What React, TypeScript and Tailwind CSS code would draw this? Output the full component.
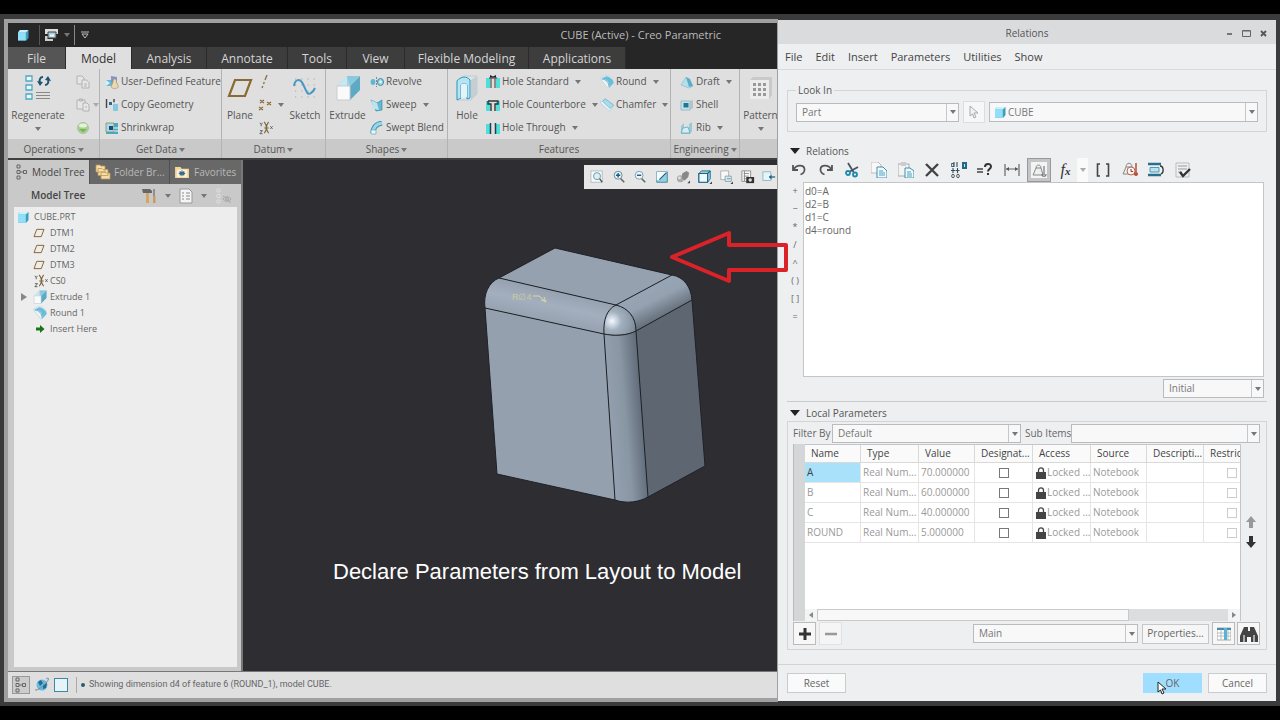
import React, { useState } from 'react';

interface Parameter {
  name: string;
  value: string;
}

const parameters: Parameter[] = [
  { name: 'A', value: '70.000000' },
  { name: 'B', value: '60.000000' },
  { name: 'C', value: '40.000000' },
  { name: 'ROUND', value: '5.000000' },
];

const operators = ['+', '−', '*', '/', '^', '( )', '[ ]', '='];

type IconProps = { className?: string };

const Caret = ({ className = 'text-[#777]' }: IconProps) => (
  <svg viewBox="0 0 6 4" className={`h-1 w-1.5 shrink-0 ${className}`} fill="currentColor"><path d="M0 0h6L3 4z" /></svg>
);

const CubeIcon = ({ className = 'h-3 w-3' }: IconProps) => (
  <svg viewBox="0 0 12 12" className={`shrink-0 ${className}`}>
    <path d="M1 3.500 3 1h8.500v8L9.500 11.500H1z" fill="#3f9dbb" />
    <path d="M1 3.500h7.800v8H1z" fill="#8fe0f8" />
    <path d="M1 3.500 3 1h8.500L8.800 3.500z" fill="#c9f2fc" />
  </svg>
);

const PlaneIcon = ({ className = 'h-3 w-3.5' }: IconProps) => (
  <svg viewBox="0 0 26 22" className={className} fill="none" stroke="#8a6a33" strokeWidth="2.2">
    <path d="M8 3h16l-6 16H2z" />
  </svg>
);

const CsysIcon = ({ className = 'h-3.5 w-4' }: IconProps) => (
  <svg viewBox="0 0 16 16" className={className} fill="none" stroke="#7d6433" strokeWidth="1.2">
    <path d="M6 1c3 4 3 9 0 13M11 1C8 5 8 10 11 14M6 8h5" />
    <path d="m1 2 1.500 2L4 2M2.500 4v2M1 11h3l-3 3.500h3M13 6l2.500 3M15.500 6 13 9" stroke="#555" strokeWidth="1" />
  </svg>
);

const ExtrudeIcon = ({ className = 'h-3.5 w-3.5' }: IconProps) => (
  <svg viewBox="0 0 26 26" className={className}>
    <path d="M2 11 12 1h13v14L15 25H2z" fill="#a5d3e2" />
    <path d="m12 1 13 0-10 10v14l10-10V1z" fill="#5ea9c4" />
    <path d="M12 1v10L2 11z" fill="#c8e8f1" />
    <path d="M12 1h13L15 11z" fill="#8cc9dd" />
    <path d="M2 11h13v14H2z" fill="#fafafa" stroke="#c8ccd0" strokeWidth="1" />
  </svg>
);

const RoundIcon = ({ className = 'h-3.5 w-3.5' }: IconProps) => (
  <svg viewBox="0 0 16 16" className={className}>
    <path d="m0 4 6-3.500c5 0 9 3 9.500 8L11 14 9 15z" fill="#eaf4f7" stroke="#a9cbd6" strokeWidth=".6" />
    <path d="m2 4 5-2.500c4 .5 8 3.500 8.500 7.500L11 14C11 8 8 4.500 2 4z" fill="#67bddb" />
    <path d="M2 4.500c5 .5 8 3.500 8.500 9.500" fill="none" stroke="#3089aa" strokeWidth=".8" />
  </svg>
);

const ChamferIcon = () => (
  <svg viewBox="0 0 16 16" className="h-3.5 w-3.5">
    <path d="m0 5 6-4 9.500 7L11 15z" fill="#eef5f7" stroke="#9bc7d6" strokeWidth=".7" />
    <path d="m6 1 9.500 7-4 4L3 4z" fill="#a9dcea" stroke="#4aa0bd" strokeWidth=".6" />
  </svg>
);

const RegenerateIcon = () => (
  <svg viewBox="0 0 26 26" className="h-[26px] w-[26px]">
    <g fill="#e8f8fc" stroke="#4da8c5" strokeWidth="1.300">
      <path d="M1 1h6v5H1zM1 10h6v5H1zM1 19h6v5H1z" />
    </g>
    <path d="M11 17.500h14M11 20.500h14M11 23.500h14" stroke="#888" strokeWidth="1.200" />
    <g fill="none" stroke="#1d5573" strokeWidth="2">
      <path d="M18 2c-3 0-4 3-3 6M20 10c3 0 4-3 3-6" />
    </g>
    <path d="m12 6 3 5 3-4zM20 5l3-4 3 5z" fill="#1d5573" />
  </svg>
);

const CopyIcon = ({ className = 'h-3.5 w-3.5' }: IconProps) => (
  <svg viewBox="0 0 14 14" className={className} fill="#e6e6e6" stroke="#b3b3b3">
    <path d="M1 1h5l2 2v6H1z" />
    <path d="M6 5h4.500L13 7.500V13H6zM8 9h3M8 11h3" />
  </svg>
);

const PasteIcon = () => (
  <svg viewBox="0 0 14 14" className="h-3.5 w-3.5" fill="#e6e6e6" stroke="#b3b3b3">
    <path d="M1 2h8v9H1zM3.500 1h3v2h-3z" />
    <path d="M7 5h4l2 2v6H7zM9 9h2" />
  </svg>
);

const OrbIcon = () => (
  <svg viewBox="0 0 14 14" className="h-3.5 w-3.5">
    <circle cx="7" cy="7" r="5.500" fill="#a7d28d" stroke="#b5bdb0" />
    <ellipse cx="7" cy="4.500" rx="4" ry="2" fill="#e3f3da" />
    <path d="M3 8h8L7 11.500z" fill="#79b65a" />
  </svg>
);

const UdfIcon = () => (
  <svg viewBox="0 0 14 14" className="h-3.5 w-3.5">
    <path d="M1 5h8v6H1z" fill="#67b9d8" />
    <path d="m6 1 6 1v6H6z" fill="#8495c8" />
    <path d="M9.500 4c2 0 2 2 2 3l2 5c-2 2-6 2-7.500 0l2-5c0-1 0-3 1.500-3z" fill="#ead7b4" stroke="#ab8b57" strokeWidth=".6" />
    <path d="m1 5 4 3-4 3z" fill="#d4f1fa" />
  </svg>
);

const CopyGeomIcon = () => (
  <svg viewBox="0 0 14 14" className="h-3.5 w-3.5">
    <path d="M1.500 1v9M9 1v9" stroke="#444" strokeWidth="1.400" />
    <path d="M4 4h3v3H4z" fill="#236d8c" />
    <path d="M8 5h5v8H8z" fill="#86c9de" />
    <path d="M7 5h6" stroke="#fff" />
  </svg>
);

const ShrinkwrapIcon = () => (
  <svg viewBox="0 0 14 14" className="h-3.5 w-3.5">
    <path d="M1 2h12v11H1z" fill="#47a9c6" />
    <path d="M1 2h8v9H1z" fill="#a6dceb" stroke="#858a60" strokeWidth=".8" />
    <path d="M4 5h4v4H4z" fill="#204c74" />
    <path d="M9 7h5M9 10h5" stroke="#f3f7f8" />
  </svg>
);

const AxisIcon = () => (
  <svg viewBox="0 0 14 14" className="h-3.5 w-3.5"><path d="m9 0-2 5M6.300 7 5.500 9M4.800 11 4 13" stroke="#8b734b" strokeWidth="1.400" /></svg>
);

const PointIcon = () => (
  <svg viewBox="0 0 14 14" className="h-3.5 w-3.5" stroke="#8a6a33" strokeWidth="1.200">
    <path d="m2 2 4 3M6 2 2 5M9 4l4 3M13 4 9 7M1 9l4 3M5 9l-4 3" />
  </svg>
);

const SketchIcon = () => (
  <svg viewBox="0 0 26 24" className="h-6 w-[26px]" fill="none">
    <path d="M3 3h20M3 9h20M3 15h20M3 21h20" stroke="#b2a794" strokeWidth="1.200" strokeDasharray="1.200 5" />
    <path d="M2 10c1-7 6-8 9-2s4 12 8 9c2-1 3-3 4-5" stroke="#4599c6" strokeWidth="2" />
  </svg>
);

const RevolveIcon = () => (
  <svg viewBox="0 0 14 14" className="h-3.5 w-3.5">
    <ellipse cx="3" cy="7" rx="2.400" ry="3" fill="#60b7d4" />
    <ellipse cx="10.500" cy="7" rx="3" ry="3.500" fill="#9ad4e5" stroke="#368daa" />
    <path d="M6.500 2v10" stroke="#888" strokeDasharray="2 1" />
    <circle cx="10.500" cy="7" r="1.300" fill="#ecf8fb" />
  </svg>
);

const SweepIcon = () => (
  <svg viewBox="0 0 14 14" className="h-3.5 w-3.5">
    <path d="m1 2 6 3 5-3v10l-6 1z" fill="#67b6cf" stroke="#378cab" strokeWidth=".7" />
    <path d="m1 2 6 3 2 7-5-1z" fill="#b9e4f0" />
  </svg>
);

const SweptBlendIcon = () => (
  <svg viewBox="0 0 14 14" className="h-3.5 w-3.5" fill="none">
    <path d="M3 12C3 6 6 3 12 2" stroke="#3f94b1" strokeWidth="5" />
    <path d="M3 12C3 6 6 3 12 2" stroke="#9bd7e8" strokeWidth="3" />
    <path d="M1 9h5v4H1z" fill="#e9f6fa" stroke="#6ca9bd" strokeWidth=".7" />
  </svg>
);

const HoleIcon = () => (
  <svg viewBox="0 0 24 26" className="h-[26px] w-6">
    <path d="m2 5 7-4h13v18l-6 6H2z" fill="#dde3e6" stroke="#b5c5cb" strokeWidth=".7" />
    <path d="m16 5 6-4v18l-6 6z" fill="#c5ced3" />
    <path d="M2 25V6c4-5 10-5 13-1v18l-3 1V10c-1-2-5-2-6 0v13z" fill="#b5e5f3" stroke="#329ac0" strokeWidth="1" />
    <path d="M6 23V10c1-2 5-2 6 0v12z" fill="#e6f4f8" />
  </svg>
);

const HoleRowIcon = ({ kind }: { kind: string }) => (
  <svg viewBox="0 0 14 14" className="h-3.5 w-3.5">
    <path d="M0 3h4v10H0zM10 3h4v10h-4z" fill="#4fded9" />
    {kind === 'standard' && <path d="M5 3v10M9 3v10M3 3h8" stroke="#666" strokeWidth="1.400" />}
    {kind === 'standard' && <path d="M4 2.500V0l3 1.500L10 0v2.500z" fill="#222" />}
    {kind === 'counterbore' && <path d="M2 3h10v3H9v7M5 13V6H2V3" fill="none" stroke="#333" strokeWidth="1.400" />}
    {kind === 'through' && <path d="M4.500 2v11M9.500 2v11" stroke="#253e4f" strokeWidth="1.500" />}
  </svg>
);

const DraftIcon = () => (
  <svg viewBox="0 0 14 14" className="h-3.5 w-3.5">
    <path d="m1 10 5-8 7 9-4 2z" fill="#b6dfec" stroke="#7eb8ca" strokeWidth=".6" />
    <path d="m6 2 4 2 3 7-4 1z" fill="#5bacc9" />
  </svg>
);

const ShellIcon = () => (
  <svg viewBox="0 0 14 14" className="h-3.5 w-3.5">
    <path d="M1 3h9v9H1z" fill="#c1e3ed" stroke="#93bdca" />
    <path d="m10 3 3-1v8l-3 2z" fill="#b5c2c7" />
    <path d="M3.500 5h5v4.500h-5z" fill="#2a7191" />
  </svg>
);

const RibIcon = () => (
  <svg viewBox="0 0 14 14" className="h-3.5 w-3.5">
    <path d="m1 5 3-3v8h5V3l3-2v9l-2 3H1z" fill="#9dc7d5" />
    <path d="M1 12h9l-2-6-5 1z" fill="#d3edf4" stroke="#53a0b9" strokeWidth=".7" />
  </svg>
);

const PatternIcon = () => (
  <svg viewBox="0 0 24 24" className="h-6 w-6">
    <path d="m1 4 3-3h19v18l-3 4H1z" fill="#c9c9c9" />
    <path d="M1 4h19v19H1z" fill="#ececec" />
    <g fill="#999">
      <path d="M4 7h3v3H4zM9 7h3v3H9zM14 7h3v3h-3zM4 12h3v3H4zM9 12h3v3H9zM14 12h3v3h-3zM4 17h3v3H4zM9 17h3v3H9zM14 17h3v3h-3z" />
    </g>
  </svg>
);

const TreeNodesIcon = () => (
  <svg viewBox="0 0 12 16" className="h-4 w-3 shrink-0" fill="none" stroke="#666">
    <path d="M1 1h3v3H1zM1 6.500h3v3H1zM1 12h3v3H1zM7.500 6.500h3v3h-3zM4 8h3" />
  </svg>
);

const FoldersIcon = () => (
  <svg viewBox="0 0 16 16" className="h-4 w-4 shrink-0" fill="#f7dca5" stroke="#b9975b" strokeWidth=".8">
    <path d="M1 1h4l1 1h4v6H1zM3 4.500h4l1 1h5v6H3zM6 8h4l1 1h4v6H6z" />
  </svg>
);

const FavoriteIcon = () => (
  <svg viewBox="0 0 15 13" className="h-3 w-3.5 shrink-0">
    <path d="M0 1h6l1 2h8v10H0z" fill="#f5d79a" />
    <path d="M2 4h11v8H2z" fill="#fcf2d9" />
    <path d="M4 8h7M7.500 5v6M5 6l5 4M10 6l-5 4" stroke="#376b89" strokeWidth="1.200" />
  </svg>
);

// Small toolbar above the model, drawn on a 16 unit grid.
const viewIcons: React.ReactNode[] = [
  <><path d="M1 1h13v13H1z" fill="#f5fafb" stroke="#a9b9bf" /><circle cx="8" cy="7" r="4" fill="#dceff5" stroke="#688f9f" /><path d="m11 10 3 4" stroke="#555" strokeWidth="1.500" /></>,
  <><circle cx="7" cy="6" r="4.500" fill="#eef8fa" stroke="#547e91" /><path d="M4.500 6h5M7 3.500v5" stroke="#175b83" strokeWidth="1.600" /><path d="m10 10 4 4" stroke="#666" strokeWidth="1.800" /></>,
  <><circle cx="7" cy="6" r="4.500" fill="#eef8fa" stroke="#7896a2" /><path d="M4.500 6h5" stroke="#175b83" strokeWidth="1.600" /><path d="m10 10 4 4" stroke="#666" strokeWidth="1.800" /></>,
  <><path d="M2 2h12v12H2z" fill="#92d0e3" stroke="#3b7e99" /><path d="M2 2h12L5 11l-3 1z" fill="#f2fafb" /><path d="m13 3-8 8" stroke="#2d5a6f" strokeWidth="1.300" /></>,
  <><circle cx="5" cy="10" r="4" fill="#aaa" /><path d="m7 4 5-3 3 2-1 5-4 4-3-2z" fill="#888" /><circle cx="4" cy="9" r="1.500" fill="#e5e5e5" /><path d="M13 15h3v-3z" fill="#444" /></>,
  <><path d="m1 4 3-3h10v9l-3 4H1z" fill="#9ed2e3" stroke="#1d6380" /><path d="M1 4h10v10H1zM11 4l3-3" fill="#eefafd" stroke="#1d6380" strokeWidth="1.300" /><path d="M13 16h3v-3z" fill="#444" /></>,
  <><path d="M2 1h9v10H2z" fill="#f8f8f8" stroke="#aaa" /><path d="M7 7h7v6H7z" fill="#dcedf2" stroke="#7f9da8" /><path d="M9 10h4" stroke="#4d8ba1" /><path d="M13 16h3v-3z" fill="#444" /></>,
  <><path d="M1 1h10v12H1zM3 4h6M3 7h6M3 10h3M4 1v12" fill="#f7f7f7" stroke="#888" /><path d="M6 8h9v7H6z" fill="#333" /><circle cx="10.500" cy="11.500" r="2" fill="#ddd" /></>,
  <><path d="M1 2h9v10H1z" fill="#e6f4f8" stroke="#8ab5c4" /><path d="M8 8h7" stroke="#246986" strokeWidth="1.500" /><path d="m8 8 3-3v6z" fill="#246986" /></>,
];

const editIcons: { label: string; art: React.ReactNode }[] = [
  { label: 'Undo', art: <path d="M2 3v5h5M2.500 7.500C6 2 13 3 13.500 7c.3 3-2 5-4 5.500" fill="none" stroke="#555" strokeWidth="1.800" /> },
  { label: 'Redo', art: <path d="M14 3v5H9M13.500 7.500C10 2 3 3 2.500 7c-.3 3 2 5 4 5.500" fill="none" stroke="#555" strokeWidth="1.800" /> },
  { label: 'Cut', art: <><path d="M4 1 9.500 10M14 5 5 10" stroke="#456" strokeWidth="1.800" /><circle cx="4" cy="11" r="2" fill="none" stroke="#2189ae" strokeWidth="1.800" /><circle cx="11" cy="12.500" r="2" fill="none" stroke="#2189ae" strokeWidth="1.800" /></> },
  { label: 'Copy', art: <><path d="M0 0h7l3 3v8H0z" fill="#f8f8f8" stroke="#bbb" /><path d="M6 5h6l4 4v7H6z" fill="#eefafd" stroke="#3f8eaa" /><path d="M8 9h4M8 11h6M8 13h6" stroke="#4ea1bd" /></> },
  { label: 'Paste', art: <><path d="M0 2h11v12H0z" fill="#f3f3f3" stroke="#aaa" /><path d="M3 0h5v4H3z" fill="#ccc" /><path d="M7 6h5l4 3v7H7z" fill="#eefafd" stroke="#3f8eaa" /><path d="M9 10h4M9 12h5M9 14h5" stroke="#4ea1bd" /></> },
  { label: 'Delete', art: <path d="m2 2 12 12M14 2 2 14" stroke="#444" strokeWidth="2.400" /> },
  { label: 'Switch dimensions', art: <><path d="M0 3a1.500 1.500 0 1 0 3 0 1.500 1.500 0 1 0-3 0M3 0v5M6 0v5M2 6v5M6.500 6v5M0 8.500h4M4.500 8.500h4" fill="none" stroke="#31505e" strokeWidth="1.100" /><ellipse cx="2" cy="14" rx="1.300" ry="1.800" fill="none" stroke="#555" /><ellipse cx="7" cy="14" rx="1.300" ry="1.800" fill="none" stroke="#555" /><path d="M11 0h5v7h-5z" fill="#236985" /><path d="M13.500 2v3" stroke="#c3e5ef" /></> },
  { label: 'Evaluate', art: <><path d="M0 7h6M0 10h6" stroke="#444" strokeWidth="1.600" /><path d="M8 5c0-4 6-4 6-.5 0 2.500-3 2.500-3 5M11 11v2" fill="none" stroke="#333" strokeWidth="2" /></> },
  { label: 'Insert dimension', art: <><path d="M1 2v12M15 2v12M2 7h12" stroke="#666" strokeWidth="1.200" /><path d="m2 7 3-2v4zM14 7l-3-2v4z" fill="#555" /></> },
  { label: 'Set units', art: <><path d="M0 0h16v16H0z" fill="#f4f4f4" /><path d="m2 13 3-7h5l2 7zM5 6c0-4 5-4 5 0" fill="#eee" stroke="#888" /><path d="M13 4v9M11 12c0 3 4 3 4 0" fill="none" stroke="#777" strokeWidth="1.200" /></> },
];

const editIconsAfter: { label: string; art: React.ReactNode }[] = [
  { label: 'Brackets', art: <path d="M5 2H2.500v12H5M11 2h2.500v12H11" fill="none" stroke="#444" strokeWidth="1.600" /> },
  { label: 'Unit sensitive', art: <><path d="m1 12 3-7h6l3 7zM4 5c0-5 6-5 6 0" fill="#eee" stroke="#888" /><circle cx="9" cy="9" r="4" fill="#fff4f0" stroke="#b46a54" /><path d="M9 7v2.500h2" fill="none" stroke="#934" /><path d="M14 1v9" stroke="#b55a46" strokeWidth="1.600" /><circle cx="14" cy="12" r="2" fill="#b84d38" /></> },
  { label: 'Sort', art: <><path d="M0 2h13M0 13h13" stroke="#28708d" strokeWidth="2.400" /><path d="M2 5.500h9v4.500H2z" fill="#b6e3ef" stroke="#5699af" /><path d="M12 4c4 0 4 7 1 8" fill="none" stroke="#333" strokeWidth="1.300" /></> },
  { label: 'Verify', art: <><path d="M1 1h13v14H1z" fill="#f0f0f0" stroke="#bbb" /><path d="M3 4h9M3 7h9M3 10h4" stroke="#999" /><path d="m5 10 3 4 7-7" fill="none" stroke="#333" strokeWidth="2.400" /></> },
];

interface SelectBoxProps {
  id: string;
  label?: string;
  value: string;
  className: string;
  icon?: React.ReactNode;
}

const SelectBox = ({ id, label, value, className, icon }: SelectBoxProps) => (
  <div className={`relative border border-[#b9bcbf] bg-[#f8f8f8] ${className}`}>
    <select
      id={id}
      aria-label={label}
      className={`block h-full w-full appearance-none bg-transparent pr-4 text-[10px] text-[#777] outline-none ${icon ? 'pl-[18px]' : 'pl-[5px]'}`}
    >
      <option>{value}</option>
    </select>
    {icon && <span className="pointer-events-none absolute inset-y-0 left-1 flex items-center">{icon}</span>}
    <span className="pointer-events-none absolute inset-y-0 right-0 flex w-3 items-center justify-center border-l border-[#c5c7c9]">
      <Caret />
    </span>
  </div>
);

interface GroupProps {
  title: string;
  menu?: boolean;
  className: string;
  children: React.ReactNode;
}

const Group = ({ title, menu, className, children }: GroupProps) => (
  <section className={`flex flex-col border-r border-[#b3b3b3] ${className}`}>
    <div className="flex h-[70px] bg-[#dfdfdf] pt-px">{children}</div>
    <h2 className="flex h-[19px] items-center justify-center gap-0.5 bg-[#c9c9c9] pt-0.5 text-[10px] text-[#555]">
      {title}
      {menu && <Caret />}
    </h2>
  </section>
);

const Command = ({ icon, label, menu }: { icon: React.ReactNode; label: string; menu?: boolean }) => (
  <button className="flex h-[23px] items-center gap-0.5 whitespace-nowrap text-[10px] text-[#555]">
    {icon}
    <span>{label}</span>
    {menu && <Caret className="ml-1 text-[#777]" />}
  </button>
);

const BigCommand = ({ icon, label, menu, className }: { icon: React.ReactNode; label: string; menu?: boolean; className: string }) => (
  <button className={`flex shrink-0 flex-col items-center pt-1 text-[10px] text-[#555] ${className}`}>
    <span className="flex h-7 items-center">{icon}</span>
    <span className="mt-1.5 leading-[15px]">{label}</span>
    {menu && <Caret className="mt-1 text-[#777]" />}
  </button>
);

const Ribbon = () => (
  <div className="flex overflow-hidden border-b-2 border-[#3f3f3f]">
    <Group title="Operations" menu className="w-[92px] shrink-0">
      <BigCommand icon={<RegenerateIcon />} label="Regenerate" menu className="w-[60px]" />
      <div className="flex flex-col">
        <button aria-label="Copy" className="flex h-[23px] items-center pl-2"><CopyIcon /></button>
        <button aria-label="Paste" className="flex h-[23px] items-center gap-[3px] pl-2"><PasteIcon /><Caret className="text-[#aaa]" /></button>
        <button aria-label="Regeneration manager" className="flex h-[23px] items-center pl-2"><OrbIcon /></button>
      </div>
    </Group>
    <Group title="Get Data" menu className="w-[122px] shrink-0">
      <div className="flex flex-col items-start pl-[5px]">
        <Command icon={<UdfIcon />} label="User-Defined Feature" />
        <Command icon={<CopyGeomIcon />} label="Copy Geometry" />
        <Command icon={<ShrinkwrapIcon />} label="Shrinkwrap" />
      </div>
    </Group>
    <Group title="Datum" menu className="w-[104px] shrink-0">
      <BigCommand icon={<PlaneIcon className="h-[22px] w-[26px]" />} label="Plane" className="w-9" />
      <div className="flex w-7 flex-col">
        <button aria-label="Axis" className="flex h-[23px] items-center"><AxisIcon /></button>
        <button aria-label="Point" className="flex h-[23px] items-center gap-1.5"><PointIcon /><Caret /></button>
        <button aria-label="Coordinate system" className="flex h-[23px] items-center"><CsysIcon /></button>
      </div>
      <BigCommand icon={<SketchIcon />} label="Sketch" className="w-[38px]" />
    </Group>
    <Group title="Shapes" menu className="w-[122px] shrink-0">
      <BigCommand icon={<ExtrudeIcon className="h-[26px] w-[26px]" />} label="Extrude" className="w-[43px]" />
      <div className="flex flex-col items-start pl-px">
        <Command icon={<RevolveIcon />} label="Revolve" />
        <Command icon={<SweepIcon />} label="Sweep" menu />
        <Command icon={<SweptBlendIcon />} label="Swept Blend" />
      </div>
    </Group>
    <Group title="Features" className="w-[223px] shrink-0">
      <BigCommand icon={<HoleIcon />} label="Hole" className="w-[38px]" />
      <div className="flex w-[114px] flex-col items-start">
        <Command icon={<HoleRowIcon kind="standard" />} label="Hole Standard" menu />
        <Command icon={<HoleRowIcon kind="counterbore" />} label="Hole Counterbore" menu />
        <Command icon={<HoleRowIcon kind="through" />} label="Hole Through" menu />
      </div>
      <div className="flex flex-col items-start">
        <Command icon={<RoundIcon />} label="Round" menu />
        <Command icon={<ChamferIcon />} label="Chamfer" menu />
      </div>
    </Group>
    <Group title="Engineering" menu className="w-[69px] shrink-0">
      <div className="flex flex-col items-start pl-[9px]">
        <Command icon={<DraftIcon />} label="Draft" menu />
        <Command icon={<ShellIcon />} label="Shell" />
        <Command icon={<RibIcon />} label="Rib" menu />
      </div>
    </Group>
    <Group title="" className="min-w-0 flex-1 border-r-0">
      <BigCommand icon={<PatternIcon />} label="Pattern" menu className="w-[41px]" />
    </Group>
  </div>
);

const tabs = [
  { label: 'File', className: 'w-[58px] bg-[#555] text-[#d5d5d5]' },
  { label: 'Model', className: 'w-[66px] bg-[#dfdfdf] text-[#333]' },
  { label: 'Analysis', className: 'w-[75px] bg-[#3d3d3d] text-[#d5d5d5]' },
  { label: 'Annotate', className: 'w-[81px] bg-[#3d3d3d] text-[#d5d5d5]' },
  { label: 'Tools', className: 'w-[59px] bg-[#3d3d3d] text-[#d5d5d5]' },
  { label: 'View', className: 'w-[58px] bg-[#3d3d3d] text-[#d5d5d5]' },
  { label: 'Flexible Modeling', className: 'w-[124px] bg-[#3d3d3d] text-[#d5d5d5]' },
  { label: 'Applications', className: 'w-[97px] bg-[#3d3d3d] text-[#d5d5d5]' },
];

const treeItems: { label: string; icon: React.ReactNode; open?: boolean }[] = [
  { label: 'DTM1', icon: <PlaneIcon className="h-2.5 w-3" /> },
  { label: 'DTM2', icon: <PlaneIcon className="h-2.5 w-3" /> },
  { label: 'DTM3', icon: <PlaneIcon className="h-2.5 w-3" /> },
  { label: 'CS0', icon: <CsysIcon /> },
  { label: 'Extrude 1', icon: <ExtrudeIcon />, open: true },
  { label: 'Round 1', icon: <RoundIcon /> },
  {
    label: 'Insert Here',
    icon: <svg viewBox="0 0 10 10" className="ml-0.5 h-2.5 w-2.5"><path d="M1 3.500h4V1l4.500 4L5 9V6.500H1z" fill="#187418" /></svg>,
  },
];

const ModelTree = () => (
  <aside className="flex w-[235px] shrink-0 flex-col border-r-2 border-[#777] bg-[#c9c9c9]">
    <div className="flex h-6 bg-[#686868] text-[10px]">
      <button className="flex w-[82px] items-center gap-1 border-r border-[#555] bg-[#c9c9c9] pl-2 whitespace-nowrap text-[#444]"><TreeNodesIcon />Model Tree</button>
      <button className="flex w-20 items-center gap-[3px] border-r border-[#505050] pl-[5px] whitespace-nowrap text-[#b9b9b9]"><FoldersIcon />Folder Br...</button>
      <button className="flex flex-1 items-center gap-[5px] pl-[5px] whitespace-nowrap text-[#b9b9b9]"><FavoriteIcon />Favorites</button>
    </div>
    <div className="flex h-[23px] items-center pr-2 pl-[23px]">
      <h2 className="flex-1 text-[10px] font-semibold text-[#444]">Model Tree</h2>
      <button aria-label="Settings" className="flex items-center gap-2">
        <svg viewBox="0 0 16 16" className="h-4 w-4"><path d="M1 1h8l2 2v2H2z" fill="#666" /><path d="M5 5h3v10H5z" fill="#d6a563" /><path d="M13 1v7" stroke="#777" strokeWidth="1.400" /><path d="M12 8h2.500v7H12z" fill="#c89b62" /></svg>
        <Caret />
      </button>
      <button aria-label="Show" className="ml-2 flex items-center gap-2">
        <svg viewBox="0 0 14 16" className="h-4 w-3.5"><path d="M1 1h9l3 3v11H1z" fill="#f5f5f5" stroke="#999" /><path d="M3 5h2M7 5h4M3 8h2M7 8h4M3 11h2M7 11h4" stroke="#888" /></svg>
        <Caret />
      </button>
      <button aria-label="Find" className="ml-2">
        <svg viewBox="0 0 18 16" className="h-4 w-[18px]" fill="none" stroke="#aaa"><path d="M2 1h3v3H2zM2 6.500h3v3H2zM2 12h3v3H2z" stroke="#ddd" /><path d="M8 11c2-3 6-3 8 0-2 3-6 3-8 0M8 8l8 7" /><circle cx="12" cy="11" r="1.500" /></svg>
      </button>
    </div>
    <ul className="mr-1 mb-1 ml-1.5 flex-1 bg-[#ededed] pt-0.5 text-[9px] text-[#666]">
      <li className="flex h-4 items-center gap-[5px] pl-[3px]"><CubeIcon />CUBE.PRT</li>
      {treeItems.map((item) => (
        <li key={item.label} className="flex h-4 items-center pl-[7px]">
          <span className="w-3">
            {item.open && <svg viewBox="0 0 6 8" className="h-2 w-1.5"><path d="M0 0v8l6-4z" fill="#888" /></svg>}
          </span>
          <span className="flex w-[17px] items-center">{item.icon}</span>
          {item.label}
        </li>
      ))}
    </ul>
  </aside>
);

const SolidModel = () => (
  <svg viewBox="483 247 224 257" className="absolute top-[87px] left-[240px] h-[257px] w-[224px]">
    <defs>
      <linearGradient id="leftRound" gradientUnits="userSpaceOnUse" x1="560" y1="290" x2="553" y2="323">
        <stop offset="0" stopColor="#94a0ae" />
        <stop offset=".5" stopColor="#a3afbe" />
        <stop offset="1" stopColor="#96a2b0" />
      </linearGradient>
      <linearGradient id="rightRound" gradientUnits="userSpaceOnUse" x1="643" y1="288" x2="659" y2="320">
        <stop offset="0" stopColor="#98a5b4" />
        <stop offset=".45" stopColor="#94a1b0" />
        <stop offset="1" stopColor="#626c78" />
      </linearGradient>
      <linearGradient id="frontRound" gradientUnits="userSpaceOnUse" x1="608" y1="420" x2="643" y2="417">
        <stop offset="0" stopColor="#94a0af" />
        <stop offset=".5" stopColor="#8996a4" />
        <stop offset="1" stopColor="#606b78" />
      </linearGradient>
      <radialGradient id="corner" gradientUnits="userSpaceOnUse" cx="612" cy="321" r="27">
        <stop offset="0" stopColor="#f4f9fd" />
        <stop offset=".12" stopColor="#d7e1ea" />
        <stop offset=".35" stopColor="#a3b0be" />
        <stop offset=".7" stopColor="#8d9aa8" />
        <stop offset="1" stopColor="#727e8b" />
      </radialGradient>
    </defs>
    <path d="M499 278 555 248l117 27-56 30z" fill="#95a1ae" />
    <path d="M485 308 604 334l11 166-118-26z" fill="#94a0ae" />
    <path d="m636 331 56-31 13 166-57 31z" fill="#5d6671" />
    <path d="m499 278 117 27c-7 4-13 14-12 29l-119-26c-2-14 4-26 14-30z" fill="url(#leftRound)" />
    <path d="m616 305 56-30c12 2 19 12 20 25l-56 31c0-14-8-23-20-26z" fill="url(#rightRound)" />
    <path d="m604 334 11 166c12 4 24 2 33-3l-12-166c-10 5-22 5-32 3z" fill="url(#frontRound)" />
    <path d="M616 305c-9 4-13 15-12 29 12 2 23 1 32-3 0-14-8-23-20-26z" fill="url(#corner)" />
    <g fill="none" stroke="#1e2228" strokeWidth="1">
      <path d="M499 278 555 248l117 27c12 2 19 12 20 25l13 166-57 31c-9 5-21 7-33 3l-118-26-12-166c-2-14 4-26 14-30z" />
      <path d="m499 278 117 27 56-30M485 308l119 26c10 2 22 2 32-3l56-31" />
      <path d="M616 305c-9 4-13 15-12 29l11 166M616 305c12 3 20 12 20 26l12 166" />
    </g>
    <text x="512" y="300" fontSize="9" fontFamily="Liberation Sans, sans-serif" fill="#c9ca9a">R∅4</text>
    <path d="M533 296h6l7 6m0 0-2-5m2 5-5-2" fill="none" stroke="#dad99a" strokeWidth="1" />
  </svg>
);

const Viewport = () => (
  <main className="relative flex-1 bg-[#2e2d32]">
    <div className="flex justify-end pt-[5px]">
      <div className="flex h-6 w-[193px] items-center justify-between bg-[#e6e6e6] pr-px pl-1.5">
        {viewIcons.map((art, i) => (
          <button key={i} aria-label={`View tool ${i + 1}`}>
            <svg viewBox="0 0 16 16" className="h-3.5 w-3.5">{art}</svg>
          </button>
        ))}
      </div>
    </div>
    <SolidModel />
    <p className="absolute top-[399px] left-[90px] whitespace-nowrap font-['Liberation_Sans',sans-serif] text-[22px] leading-[26px] text-white">
      Declare Parameters from Layout to Model
    </p>
    <svg viewBox="668 229 124 56" className="absolute top-[69px] -right-[15px] z-10 h-14 w-[124px]">
      <path d="m672 257 57-24v12h57v25h-57v11z" fill="none" stroke="#dc2229" strokeWidth="4" strokeLinejoin="round" />
    </svg>
  </main>
);

const PartWindow = () => (
  <div className="relative z-10 flex min-w-0 flex-1 flex-col border-4 border-r border-[#a0a0a0]">
    <header className="flex h-6 items-center bg-[#262626] pl-[9px]">
      <CubeIcon />
      <span className="ml-2.5 h-5 w-px bg-[#555]" />
      <button aria-label="Windows" className="ml-1 flex items-center gap-[5px]">
        <svg viewBox="0 0 15 14" className="h-3.5 w-[15px]"><path d="M1 1h13v5H1z" fill="#ddd" /><path d="M4 4h8v6H4z" fill="#a8d0dc" stroke="#444" /><path d="M6 6.500h4v2H6z" fill="#f4f4f4" /><path d="M1 8h2.500v5H1zM1 11h8v2H1z" fill="#ccc" /></svg>
        <Caret />
      </button>
      <span className="ml-1 h-5 w-px bg-[#888]" />
      <svg viewBox="0 0 8 8" className="ml-1.5 h-2 w-2" fill="none" stroke="#bbb"><path d="M0 1h8M1 3h6L4 7z" /></svg>
      <h1 className="flex-1 pr-14 text-right text-[11px] text-[#bbb]">CUBE (Active) - Creo Parametric</h1>
    </header>
    <nav className="flex h-[22px] bg-[#262626]">
      {tabs.map((tab) => (
        <button key={tab.label} className={`border-r border-[#2a2a2a] pt-px whitespace-nowrap text-[12px] ${tab.className}`}>
          {tab.label}
        </button>
      ))}
    </nav>
    <Ribbon />
    <div className="flex flex-1">
      <ModelTree />
      <Viewport />
    </div>
    <footer className="flex h-[27px] items-center border-t border-[#777] bg-[#dfdfdf] pl-1 font-['Roboto',sans-serif] text-[9px] text-[#666]">
      <button aria-label="Toggle tree" className="flex h-[18px] w-[18px] items-center justify-center border border-[#999] bg-[#ccc]"><TreeNodesIcon /></button>
      <button aria-label="Toggle browser" className="ml-1">
        <svg viewBox="0 0 16 16" className="h-4 w-4"><circle cx="8" cy="8" r="5.500" fill="#6bb9dc" /><path d="m4 5 3-2 2 3-3 3zM9 8l4-2-1 5-3 1z" fill="#1f6c98" /><path d="M2 12C0 15 6 12 11 7s4-7 1-5" fill="none" stroke="#7b8b93" /></svg>
      </button>
      <button aria-label="Full screen" className="ml-1 h-3.5 w-3.5 border border-[#3d88a3] bg-[#e6f3f7]" />
      <span className="ml-2 h-4 w-px bg-[#aaa]" />
      <span className="ml-1 h-1 w-1 rounded-full bg-[#295a72]" />
      <p className="ml-1">Showing dimension d4 of feature 6 (ROUND_1), model CUBE.</p>
    </footer>
  </div>
);

const SectionTitle = ({ children }: { children: React.ReactNode }) => (
  <h3 className="flex h-3.5 items-center gap-1.5 pl-[3px] text-[10px] text-[#555]">
    <svg viewBox="0 0 10 6" className="h-1.5 w-2.5"><path d="M0 0h10L5 6z" fill="#222" /></svg>
    {children}
  </h3>
);

const LockIcon = () => (
  <svg viewBox="0 0 10 12" className="h-3 w-2.5 shrink-0"><path d="M2.500 6V3.500c0-3.500 5-3.500 5 0V6" fill="none" stroke="#444" strokeWidth="1.300" /><path d="M0 5h10v7H0z" fill="#444" /></svg>
);

const columns = [
  { label: 'Name', className: 'w-14' },
  { label: 'Type', className: 'w-[58px]' },
  { label: 'Value', className: 'w-[56px]' },
  { label: 'Designat...', className: 'w-[58px]' },
  { label: 'Access', className: 'w-[58px]' },
  { label: 'Source', className: 'w-[56px]' },
  { label: 'Descripti...', className: 'w-[57px]' },
  { label: 'Restric', className: 'w-[57px]' },
];

const cell = 'h-5 overflow-hidden border-r border-b border-[#e5e5e5] px-0.5 text-left whitespace-nowrap';
const accessCell = 'h-5 border-r border-b border-[#e5e5e5] pl-[3px] text-left whitespace-nowrap';

const ParameterTable = ({ selected, onSelect }: { selected: string; onSelect: (name: string) => void }) => (
  <table className="w-[456px] table-fixed border-separate border-spacing-0 text-[10px] text-[#999]">
    <thead>
      <tr>
        {columns.map((c) => (
          <th key={c.label} className={`h-[18px] border-r border-b border-[#d9d9d9] bg-[#fafafa] pl-1.5 text-left font-normal whitespace-nowrap text-[#444] ${c.className}`}>{c.label}</th>
        ))}
      </tr>
    </thead>
    <tbody>
      {parameters.map((p) => (
        <tr key={p.name} onClick={() => onSelect(p.name)}>
          <td className={`${cell} ${p.name === selected ? 'bg-[#a9e1fb] text-[#444]' : ''}`}>{p.name}</td>
          <td className={cell}>Real Num...</td>
          <td className={cell}>{p.value}</td>
          <td className={cell}>
            <input type="checkbox" aria-label={`Designate ${p.name}`} className="mx-auto block h-2.5 w-2.5 appearance-none border border-[#777] bg-white" />
          </td>
          <td className={accessCell}><span className="flex items-center gap-px"><LockIcon />Locked ...</span></td>
          <td className={cell}>Notebook</td>
          <td className={cell} />
          <td className={cell}>
            <input type="checkbox" disabled aria-label={`Restrict ${p.name}`} className="mx-auto block h-2.5 w-2.5 appearance-none border border-[#ccc] bg-white" />
          </td>
        </tr>
      ))}
    </tbody>
  </table>
);

const squareButton = 'flex h-[23px] w-[23px] items-center justify-center border';

const RelationsDialog = () => {
  const [relations, setRelations] = useState('d0=A\nd2=B\nd1=C\nd4=round');
  const [selected, setSelected] = useState('A');

  return (
    <div role="dialog" aria-label="Relations" className="my-px flex w-[498px] shrink-0 flex-col bg-[#eeeff1]">
      <header className="relative flex h-6 items-center justify-center bg-[#dadbdd] pt-0.5 text-[10px] text-[#555]">
        <h2>Relations</h2>
        <div className="absolute right-2 flex items-center gap-2">
          <button aria-label="Minimize"><svg viewBox="0 0 9 9" className="h-[9px] w-[9px]"><path d="M2 5h5" stroke="#555" strokeWidth="1.500" /></svg></button>
          <button aria-label="Maximize"><svg viewBox="0 0 9 9" className="h-[9px] w-[9px]"><path d="M.5 1.500h8v6h-8zM1 2h7" fill="none" stroke="#666" strokeWidth="1" /></svg></button>
          <button aria-label="Close"><svg viewBox="0 0 9 9" className="h-[9px] w-[9px]"><path d="m2 2 5 5M7 2 2 7" stroke="#555" strokeWidth="1.800" /></svg></button>
        </div>
      </header>
      <nav className="flex h-[26px] items-center gap-[13px] border-b border-[#d8dadc] pt-0.5 pl-[7px] text-[11px] text-[#444]">
        {['File', 'Edit', 'Insert', 'Parameters', 'Utilities', 'Show'].map((item) => (
          <button key={item}>{item}</button>
        ))}
      </nav>

      <div className="flex flex-1 flex-col px-[9px] pt-[13px]">
        <fieldset className="border border-[#d2d4d6] px-2 pt-1 pb-2">
          <legend className="px-0.5 text-[10px] leading-[14px] text-[#555]">Look In</legend>
          <div className="flex items-center gap-1">
            <SelectBox id="look-type" label="Object type" value="Part" className="h-[19px] w-[163px]" />
            <button aria-label="Pick object" className="flex h-[22px] w-[22px] items-center justify-center border border-[#ddd] bg-[#f7f7f7]">
              <svg viewBox="0 0 10 14" className="h-3.5 w-2.5"><path d="M1 1v10l2.500-2L5 13l2-1-2-4h4z" fill="#f2f2f2" stroke="#aaa" /></svg>
            </button>
            <SelectBox id="look-object" label="Object" value="CUBE" className="h-5 flex-1" icon={<CubeIcon />} />
          </div>
        </fieldset>

        <div className="mt-3"><SectionTitle>Relations</SectionTitle></div>
        <div className="flex h-6 w-[408px] items-center justify-between">
          {editIcons.map((icon) => (
            <button
              key={icon.label}
              aria-label={icon.label}
              className={`flex h-6 w-6 items-center justify-center ${icon.label === 'Set units' ? 'border border-[#999] bg-[#c4c5c7]' : ''}`}
            >
              <svg viewBox="0 0 16 16" className="h-4 w-4">{icon.art}</svg>
            </button>
          ))}
          <div className="flex h-6">
            <button aria-label="Insert function" className="w-6 font-['Liberation_Serif',serif] text-[16px] text-[#333] italic">
              f<span className="text-[11px] font-bold">x</span>
            </button>
            <button aria-label="More functions" className="flex w-[11px] items-center justify-center bg-[#fafafa]"><Caret className="text-[#aaa]" /></button>
          </div>
          {editIconsAfter.map((icon) => (
            <button key={icon.label} aria-label={icon.label} className="flex h-6 w-6 items-center justify-center">
              <svg viewBox="0 0 16 16" className="h-4 w-4">{icon.art}</svg>
            </button>
          ))}
        </div>
        <div className="mr-[3px] flex flex-1">
          <div className="flex w-4 flex-col text-[9px] text-[#666]">
            {operators.map((op) => (
              <button key={op} className="h-[18px]">{op}</button>
            ))}
          </div>
          <textarea
            aria-label="Relations"
            spellCheck={false}
            value={relations}
            onChange={(e) => setRelations(e.target.value)}
            className="flex-1 resize-none border border-[#c3c5c7] bg-white px-px pt-0.5 text-[10px] leading-[13px] text-[#666] outline-none"
          />
        </div>
        <div className="mt-0.5 mr-[3px] flex justify-end">
          <SelectBox id="relation-kind" label="Relation evaluation" value="Initial" className="h-[19px] w-[101px]" />
        </div>
        <hr className="mt-[3px] mb-1 border-[#c9cbcd]" />

        <SectionTitle>Local Parameters</SectionTitle>
        <div className="mt-px border border-[#d2d4d6] pt-0.5 pr-[6px] pb-1 pl-[5px] text-[10px] text-[#666]">
          <div className="flex items-center gap-1">
            <label htmlFor="filter-by" className="w-[35px] whitespace-nowrap">Filter By</label>
            <SelectBox id="filter-by" value="Default" className="h-[19px] flex-1" />
            <label htmlFor="sub-items" className="-mr-1 w-[46px] whitespace-nowrap">Sub Items</label>
            <SelectBox id="sub-items" value="" className="h-[19px] flex-1" />
          </div>
          <div className="mt-px flex h-[177px]">
            <div className="w-3 shrink-0 border-l border-[#bbb] bg-[#d5d6d8]" />
            <div className="flex min-w-0 flex-1 flex-col overflow-hidden border-t border-r border-[#c3c5c7] bg-white">
              <div className="flex-1 overflow-hidden"><ParameterTable selected={selected} onSelect={setSelected} /></div>
              <div className="flex h-3 bg-[#f4f4f4]">
                <button aria-label="Scroll left" className="flex w-3 items-center justify-center"><svg viewBox="0 0 4 6" className="h-1.5 w-1"><path d="M4 0v6L0 3z" fill="#888" /></svg></button>
                <div className="flex flex-1 bg-[#dcddde]"><div className="w-[76%] border border-[#c9c9c9] bg-[#f8f8f8]" /></div>
                <button aria-label="Scroll right" className="flex w-3 items-center justify-center"><svg viewBox="0 0 4 6" className="h-1.5 w-1"><path d="M0 0v6l4-3z" fill="#888" /></svg></button>
              </div>
            </div>
            <div className="flex w-[19px] shrink-0 flex-col items-center gap-2 pt-[72px] pl-px">
              <button aria-label="Move up"><svg viewBox="0 0 10 12" className="h-3 w-2.5"><path d="m5 0 5 6H7v6H3V6H0z" fill="#999" /></svg></button>
              <button aria-label="Move down"><svg viewBox="0 0 10 12" className="h-3 w-2.5"><path d="m5 12 5-6H7V0H3v6H0z" fill="#333" /></svg></button>
            </div>
          </div>
          <div className="mt-px flex items-center">
            <button aria-label="Add" className={`${squareButton} border-[#bbb] bg-[#f7f7f7]`}><svg viewBox="0 0 12 12" className="h-3 w-3"><path d="M6 0v12M0 6h12" stroke="#333" strokeWidth="3" /></svg></button>
            <button aria-label="Remove" className={`${squareButton} ml-[3px] border-[#e2e2e2] bg-[#f5f5f5]`}><svg viewBox="0 0 12 12" className="h-3 w-3"><path d="M0 6h12" stroke="#999" strokeWidth="2.500" /></svg></button>
            <SelectBox id="param-set" label="Parameter set" value="Main" className="ml-auto h-[19px] w-[165px]" />
            <button className="ml-1 h-5 w-[67px] border border-[#c5c7c9] bg-[#f6f6f7] text-[10px]">Properties...</button>
            <button aria-label="Columns" className={`${squareButton} ml-[3px] border-[#bbb] bg-[#f7f7f7]`}>
              <svg viewBox="0 0 14 14" className="h-3.5 w-3.5"><path d="M0 1h14v12H0z" fill="#fff" stroke="#aaa" /><path d="M0 1h14v2H0z" fill="#478da8" /><path d="M0 6h14M0 9h14M4 3v10M11 3v10" stroke="#bbb" /><path d="M7 1h3v12H7z" fill="#55b5d7" /></svg>
            </button>
            <button aria-label="Find parameter" className={`${squareButton} ml-0.5 border-[#bbb] bg-[#f7f7f7]`}>
              <svg viewBox="0 0 18 16" className="h-4 w-[18px]"><path d="M4 1h4v4h2V1h4l4 9v6h-7v-5H7v5H0v-6z" fill="#444" /><path d="M3 9h2v7H3zM13 9h2v7h-2z" fill="#aaa" /></svg>
            </button>
          </div>
        </div>
      </div>

      <footer className="mt-3.5 flex items-center gap-1.5 border-t border-[#d2d4d6] px-[9px] py-2 text-[10px] text-[#666]">
        <button className="mr-auto h-5 w-[59px] border border-[#c9cbcd] bg-[#fafafa]">Reset</button>
        <button className="relative h-5 w-[59px] bg-[#a0deff]">
          OK
          <svg viewBox="0 0 10 14" className="absolute top-2 left-3.5 h-3.5 w-2.5"><path d="M1 1v10l2.500-2L5 13l2-1-2-4h4z" fill="#fff" stroke="#222" /></svg>
        </button>
        <button className="h-5 w-[59px] border border-[#c9cbcd] bg-[#fafafa]">Cancel</button>
      </footer>
    </div>
  );
};

export default function App() {
  return (
    <div className="flex min-h-screen flex-col bg-black py-3.5 font-['Open_Sans',sans-serif]">
      <div className="flex flex-1 bg-[#3b3b3b] px-1 pt-[5px] pb-1">
        <PartWindow />
        <RelationsDialog />
      </div>
    </div>
  );
}
